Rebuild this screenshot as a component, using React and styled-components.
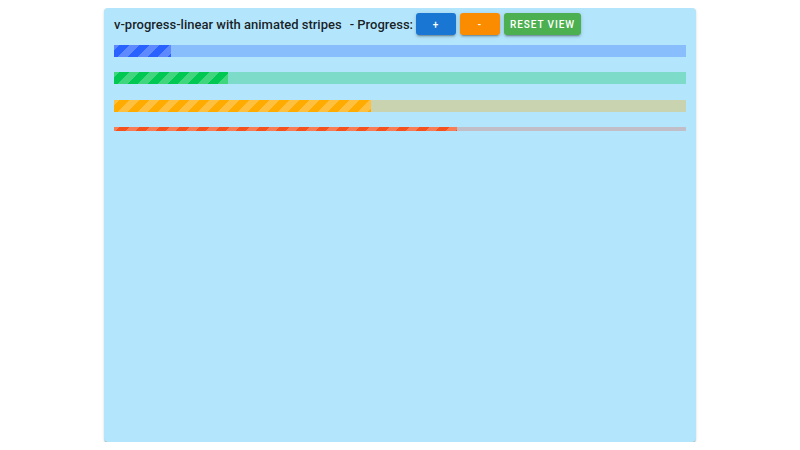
import React, {useState} from 'react'
import styled, {createGlobalStyle} from 'styled-components'

const bars = [
    {color: '#2962ff', track: '#89befd', value: 10, height: 12, gap: 10},
    {color: '#00c853', track: '#7ddcc9', value: 20, height: 12, gap: 15},
    {color: '#ffab00', track: '#cad3b0', value: 45, height: 12, gap: 16},
    {color: '#f4511e', track: '#c2bec8', value: 60, height: 4, gap: 15},
]

function App() {

    const [step, setStep] = useState(0)

    return (
        <>
            <GlobalStyle/>
            <Card>
                <Header>
                    <Title>v-progress-linear with animated stripes</Title>
                    <Label>- Progress:</Label>
                    <Button $bg="#1976d2" onClick={() => setStep(step + 5)}>+</Button>
                    <Button $bg="#fb8c00" onClick={() => setStep(step - 5)}>-</Button>
                    <Button $bg="#4caf50" $wide onClick={() => setStep(0)}>Reset view</Button>
                </Header>
                {bars.map((b, i) => {
                    const v = Math.max(0, Math.min(100, b.value + step))
                    return (
                        <Track key={i} $track={b.track} $h={b.height} $gap={b.gap}>
                            <Fill $color={b.color} style={{width: v + '%'}}/>
                        </Track>
                    )
                })}
            </Card>
        </>
    )
}

export default App

const GlobalStyle = createGlobalStyle`
  body{
    margin: 8px;
    background: #ffffff;
    font-family: Roboto, 'Liberation Sans', sans-serif;
  }
`

const Card = styled.div`
  width: 592px;
  height: 434px;
  margin: 0 auto;
  box-sizing: border-box;
  padding: 5px 10px;
  background: #b3e5fc;
  border-radius: 4px;
  box-shadow: 0 2px 1px -1px rgba(0,0,0,.2), 0 1px 1px 0 rgba(0,0,0,.14), 0 1px 3px 0 rgba(0,0,0,.12);
`

const Header = styled.div`
  display: flex;
  align-items: center;
  height: 22px;
  color: rgba(0,0,0,.87);
`

const Title = styled.span`
  font-size: 13px;
  font-weight: 500;
`

const Label = styled.span`
  font-size: 13px;
  font-weight: 500;
  margin-left: 8px;
  margin-right: 3px;
`

const Button = styled.button`
  height: 22px;
  width: ${p => p.$wide ? '77px' : '40px'};
  margin-right: 4px;
  padding: 0;
  border: none;
  border-radius: 3px;
  background: ${p => p.$bg};
  color: #fff;
  font-family: Roboto, 'Liberation Sans', sans-serif;
  font-size: 10px;
  font-weight: 500;
  letter-spacing: .09em;
  text-transform: uppercase;
  cursor: pointer;
  box-shadow: 0 3px 1px -2px rgba(0,0,0,.2), 0 2px 2px 0 rgba(0,0,0,.14), 0 1px 5px 0 rgba(0,0,0,.12);
`

const Track = styled.div`
  height: ${p => p.$h}px;
  margin-top: ${p => p.$gap}px;
  background: ${p => p.$track};
  overflow: hidden;
`

const Fill = styled.div`
  height: 100%;
  background-color: ${p => p.$color};
  background-image: linear-gradient(135deg, rgba(255,255,255,.25) 25%, transparent 0, transparent 50%, rgba(255,255,255,.25) 0, rgba(255,255,255,.25) 75%, transparent 0, transparent);
  background-size: 20px 20px;
  background-position: 16px 0;
  transition: width .2s ease;
`
